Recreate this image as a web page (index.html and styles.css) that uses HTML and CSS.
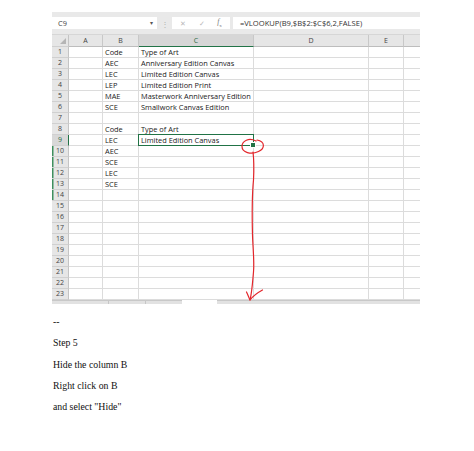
FILE: index.html
```html
<!DOCTYPE html>
<html>
<head>
<meta charset="utf-8">
<link rel="stylesheet" href="styles.css">
</head>
<body>
<div class="page">
  <div class="excel">
    <div class="fbar">
      <div class="namebox"><span>C9</span><span class="dd">&#9662;</span></div>
      <div class="dots">&#8942;</div>
      <div class="fxbox"><span class="ic">&#10005;</span><span class="ic">&#10003;</span><span class="ic fx"><i>f</i><sub>x</sub></span></div>
      <div class="formula">=VLOOKUP(B9,$B$2:$C$6,2,FALSE)</div>
    </div>
    <div class="grid">
      <div class="row head"><span class="h corner"><b class="tri"></b></span><span>A</span><span>B</span><span class="selc">C</span><span>D</span><span>E</span><span></span></div>
      <div class="row"><span class="h">1</span><span></span><span>Code</span><span>Type of Art</span><span></span><span></span><span></span></div>
      <div class="row"><span class="h">2</span><span></span><span>AEC</span><span>Anniversary Edition Canvas</span><span></span><span></span><span></span></div>
      <div class="row"><span class="h">3</span><span></span><span>LEC</span><span>Limited Edition Canvas</span><span></span><span></span><span></span></div>
      <div class="row"><span class="h">4</span><span></span><span>LEP</span><span>Limited Edition Print</span><span></span><span></span><span></span></div>
      <div class="row"><span class="h">5</span><span></span><span>MAE</span><span>Masterwork Anniversary Edition</span><span></span><span></span><span></span></div>
      <div class="row"><span class="h">6</span><span></span><span>SCE</span><span>Smallwork Canvas Edition</span><span></span><span></span><span></span></div>
      <div class="row"><span class="h">7</span><span></span><span></span><span></span><span></span><span></span><span></span></div>
      <div class="row"><span class="h">8</span><span></span><span>Code</span><span>Type of Art</span><span></span><span></span><span></span></div>
      <div class="row"><span class="h selr">9</span><span></span><span>LEC</span><span class="active">Limited Edition Canvas<b class="handle"></b></span><span></span><span></span><span></span></div>
      <div class="row"><span class="h mark">10</span><span></span><span>AEC</span><span></span><span></span><span></span><span></span></div>
      <div class="row"><span class="h mark">11</span><span></span><span>SCE</span><span></span><span></span><span></span><span></span></div>
      <div class="row"><span class="h mark">12</span><span></span><span>LEC</span><span></span><span></span><span></span><span></span></div>
      <div class="row"><span class="h mark">13</span><span></span><span>SCE</span><span></span><span></span><span></span><span></span></div>
      <div class="row"><span class="h mark">14</span><span></span><span></span><span></span><span></span><span></span><span></span></div>
      <div class="row"><span class="h">15</span><span></span><span></span><span></span><span></span><span></span><span></span></div>
      <div class="row"><span class="h">16</span><span></span><span></span><span></span><span></span><span></span><span></span></div>
      <div class="row"><span class="h">17</span><span></span><span></span><span></span><span></span><span></span><span></span></div>
      <div class="row"><span class="h">18</span><span></span><span></span><span></span><span></span><span></span><span></span></div>
      <div class="row"><span class="h">19</span><span></span><span></span><span></span><span></span><span></span><span></span></div>
      <div class="row"><span class="h">20</span><span></span><span></span><span></span><span></span><span></span><span></span></div>
      <div class="row"><span class="h">21</span><span></span><span></span><span></span><span></span><span></span><span></span></div>
      <div class="row"><span class="h">22</span><span></span><span></span><span></span><span></span><span></span><span></span></div>
      <div class="row"><span class="h">23</span><span></span><span></span><span></span><span></span><span></span><span></span></div>
    </div>
    <div class="scroll"><div class="tabs"><span></span><span></span><span></span></div><div class="hbar"></div></div>
  </div>
  <div class="notes">
    <p>--</p>
    <p>Step 5</p>
    <p>Hide the column B</p>
    <p>Right click on B</p>
    <p>and select "Hide"</p>
  </div>
  <svg class="ink" width="474" height="451" viewBox="0 0 474 451">
    <path d="M256 141 C249 137.5 242 140.5 242 146.5 C242 152.5 251 155 258.5 151.5 C265 148.5 265.5 141.5 257 140" />
    <path d="M253 152 C254 160 254 170 253.5 180 C252 195 252 215 252.5 235 C253 250 254.5 262 253.5 272 C252.5 283 252 292 250 300" />
    <path d="M246.5 292 C248 295 249 298 250 300 C253 296 257 293 262.5 290" />
  </svg>
</div>
</body>
</html>
```

FILE: styles.css
```css
html, body {
  margin: 0;
  padding: 0;
  background: #ffffff;
}
.page {
  position: relative;
  width: 474px;
  height: 451px;
  overflow: hidden;
}
.excel {
  margin: 12px 0 0 52px;
  width: 368px;
  font-family: "Open Sans", "Noto Sans", sans-serif;
  color: #1a1a1a;
}
.fbar {
  height: 23px;
  background: #e9e9e9;
  display: flex;
  align-items: center;
  box-sizing: border-box;
  border-bottom: 1px solid #d6d6d6;
}
.namebox {
  width: 105px;
  height: 12px;
  background: #fff;
  display: flex;
  align-items: center;
  justify-content: space-between;
  padding: 0 4px 0 6px;
  box-sizing: border-box;
  font-size: 7.4px;
  color: #444;
}
.dd {
  font-size: 6px;
  color: #555;
}
.dots {
  width: 15px;
  text-align: center;
  font-size: 8px;
  color: #b0b0b0;
}
.fxbox {
  width: 58px;
  height: 12px;
  background: #fff;
  display: flex;
  align-items: center;
  justify-content: space-around;
  box-sizing: border-box;
  padding: 0 2px;
}
.ic {
  font-size: 7px;
  color: #b9b9b9;
  line-height: 1;
}
.ic.fx {
  color: #777;
  font-family: "Liberation Serif", serif;
  font-size: 7.5px;
}
.ic.fx sub {
  font-size: 5px;
}
.formula {
  flex: 1;
  height: 12px;
  margin-left: 3px;
  background: #fff;
  font-size: 7.6px;
  line-height: 12px;
  padding-left: 7px;
  color: #333;
}
.row {
  display: grid;
  grid-template-columns: 17px 34px 36px 115px 115px 35px 16px;
  height: 11px;
}
.row > span {
  box-sizing: border-box;
  border-right: 1px solid #dcdcdc;
  border-bottom: 1px solid #dcdcdc;
  font-size: 7.4px;
  line-height: 10px;
  padding-left: 2px;
  white-space: nowrap;
  position: relative;
}
.row > span:last-child {
  border-right: none;
}
.row > .h {
  background: #e6e6e6;
  border-right: 1px solid #c4c4c4;
  border-bottom: 1px solid #d0d0d0;
  text-align: center;
  padding-left: 0;
  color: #444;
  font-size: 7px;
}
.row > .h.mark {
  box-shadow: inset 1.5px 0 0 #3f8f5e;
}
.row > .h.selr {
  background: #d8d8d8;
  border-right: 1px solid #217346;
  color: #2a6a44;
}
.head {
  height: 12px;
}
.head > span {
  background: #e6e6e6;
  border-right: 1px solid #c8c8c8;
  border-bottom: 1px solid #bdbdbd;
  text-align: center;
  padding-left: 0;
  color: #444;
  line-height: 11px;
  font-size: 7px;
}
.head > span:last-child {
  border-right: none;
}
.head > .selc {
  background: #d6d6d6;
  border-bottom: 1px solid #217346;
  color: #2a6a44;
}
.tri {
  position: absolute;
  right: 2px;
  bottom: 2px;
  width: 0;
  height: 0;
  border-left: 6px solid transparent;
  border-bottom: 6px solid #b5b5b5;
}
.active::before {
  content: "";
  position: absolute;
  left: -1px;
  top: -1px;
  right: -1px;
  bottom: -1px;
  border: 1.5px solid #217346;
  pointer-events: none;
}
.handle {
  position: absolute;
  right: -3px;
  bottom: -3px;
  width: 4px;
  height: 4px;
  background: #217346;
  border: 1px solid #fff;
  box-sizing: content-box;
  z-index: 2;
}
.scroll {
  height: 4px;
  display: flex;
  align-items: stretch;
}
.tabs {
  width: 130px;
  display: flex;
  background: #e2e2e2;
  border-top: 1px solid #c8c8c8;
}
.tabs span {
  border-right: 1px solid #c6c6c6;
}
.tabs span:nth-child(1) { width: 56px; }
.tabs span:nth-child(2) { width: 36px; }
.tabs span:nth-child(3) { flex: 1; border-right: none; }
.hbar {
  margin-left: 35px;
  flex: 1;
  background: #e2e2e2;
  border-top: 1px solid #c8c8c8;
}
.notes {
  margin: 7px 0 0 53px;
  font-family: "Liberation Serif", "Times New Roman", serif;
  font-size: 9.8px;
  color: #111;
}
.notes p {
  margin: 0;
  line-height: 21.3px;
}
.ink {
  position: absolute;
  left: 0;
  top: 0;
  pointer-events: none;
}
.ink path {
  fill: none;
  stroke: #e3262b;
  stroke-width: 1.2;
  stroke-linecap: round;
  stroke-linejoin: round;
}
```
